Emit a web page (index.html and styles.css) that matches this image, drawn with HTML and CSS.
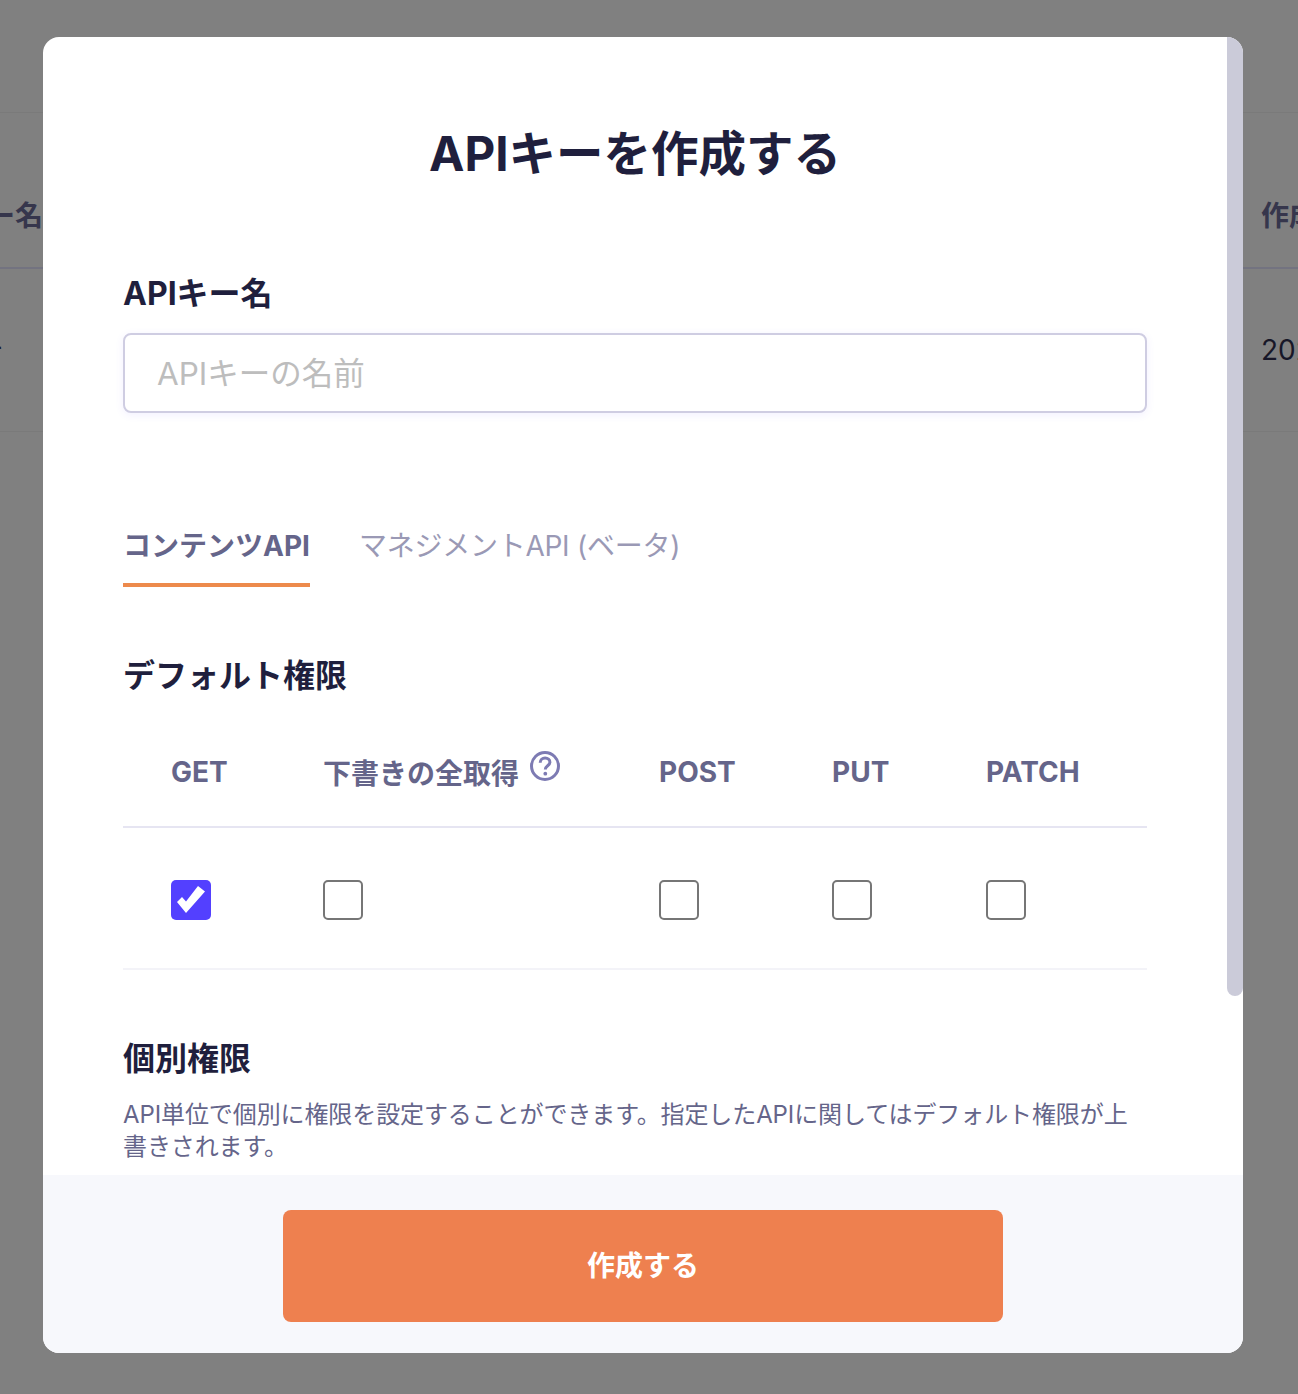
FILE: index.html
```html
<!DOCTYPE html>
<html lang="ja">
  <head>
    <meta charset="utf-8">
    <title>APIキーを作成する</title>
    <link rel="stylesheet" href="styles.css">
  </head>
  <body>
    <div class="page-table">
      <div class="page-row page-row-head">
        <span class="page-name">APIキー名</span>
        <span class="page-date">作成日</span>
      </div>
      <div class="page-row">
        <span class="page-key">下書き</span>
        <span class="page-value">2020/01/01</span>
      </div>
    </div>

    <div class="modal">
      <div class="modal-body">
        <h1 class="title">APIキーを作成する</h1>

        <label class="label" for="key-name">APIキー名</label>
        <input class="text-input" id="key-name" type="text" placeholder="APIキーの名前">

        <div class="tabs">
          <div class="tab tab-active">コンテンツAPI</div>
          <div class="tab tab-beta">マネジメントAPI (ベータ)</div>
        </div>

        <h2 class="section-title">デフォルト権限</h2>
        <div class="perm-grid perm-head">
          <div>GET</div>
          <div class="perm-draft">
            <span>下書きの全取得</span>
            <svg class="help" viewBox="0 0 30 30" width="30" height="30">
              <circle cx="15" cy="15" r="13.500" fill="none" stroke="#7d7bb3" stroke-width="3"/>
              <path d="M10.200 11.800c0-2.800 2.100-4.700 4.900-4.700 2.700 0 4.800 1.700 4.800 4.100 0 3.500-4.600 3.600-4.600 7.300" fill="none" stroke="#7d7bb3" stroke-width="3"/>
              <circle cx="15.300" cy="22.700" r="1.900" fill="#7d7bb3"/>
            </svg>
          </div>
          <div>POST</div>
          <div>PUT</div>
          <div>PATCH</div>
        </div>
        <div class="perm-grid perm-row">
          <div class="check check-on">
            <svg viewBox="0 0 40 40" width="40" height="40">
              <path d="M6 22l5-5 4 4.500L27 6l7 5.500L15 33z" fill="#fff"/>
            </svg>
          </div>
          <div class="check"></div>
          <div class="check"></div>
          <div class="check"></div>
          <div class="check"></div>
        </div>

        <h2 class="section-title">個別権限</h2>
        <p class="section-note">API単位で個別に権限を設定することができます。指定したAPIに関してはデフォルト権限が上書きされます。</p>
      </div>

      <div class="scroll-thumb"></div>

      <div class="modal-footer">
        <button class="submit" type="button">作成する</button>
      </div>
    </div>
  </body>
</html>
```

FILE: styles.css
```css
* {
  box-sizing: border-box;
}

html, body {
  margin: 0;
  height: 100%;
}

body {
  position: relative;
  height: 1394px;
  overflow: hidden;
  background: #808080;
  font-family: "Inter", "Noto Sans CJK JP", sans-serif;
}

/* page behind the overlay */
.page-table {
  padding-top: 112px;
}

.page-row {
  display: flex;
  align-items: center;
  height: 163px;
  border-bottom: 1px solid #7a7a7a;
  font-size: 28px;
  color: #171728;
}

.page-row-head {
  height: 157px;
  padding-top: 48px;
  border-top: 1px solid #7a7a7a;
  border-bottom: 2px solid #737380;
  font-weight: 700;
  color: #36364c;
}

.page-name {
  flex: none;
  margin-left: -88px;
  width: 1349px;
  white-space: nowrap;
}

.page-key {
  flex: none;
  margin-left: -79px;
  width: 1340px;
  white-space: nowrap;
}

.page-date, .page-value {
  flex: none;
  white-space: nowrap;
}

/* modal */
.modal {
  position: absolute;
  top: 37px;
  left: 43px;
  width: 1200px;
  height: 1316px;
  display: flex;
  flex-direction: column;
  overflow: hidden;
  background: #fff;
  border-radius: 16px;
}

.modal-body {
  flex: 1;
  min-height: 0;
  overflow: hidden;
  padding: 0 96px 0 80px;
}

.scroll-thumb {
  position: absolute;
  top: 0;
  right: 0;
  width: 16px;
  height: 959px;
  background: #cbcbd9;
  border-radius: 0 0 8px 8px;
}

.title {
  margin: 83px 0 0;
  text-align: center;
  font-size: 47.500px;
  line-height: 68px;
  font-weight: 700;
  color: #1f1f3d;
}

.label {
  display: block;
  margin-top: 84px;
  font-size: 32px;
  line-height: 44px;
  font-weight: 700;
  color: #1f1f3d;
}

.text-input {
  display: block;
  width: 100%;
  height: 80px;
  margin-top: 17px;
  padding: 0 32px;
  border: 2px solid #cfcde2;
  border-radius: 8px;
  box-shadow: 0 2px 8px rgba(83, 64, 255, 0.08);
  font: 400 31.500px "Inter", "Noto Sans CJK JP", sans-serif;
  color: #1f1f3d;
  outline: none;
}

.text-input::placeholder {
  color: #bdbdbd;
}

.tabs {
  display: flex;
  gap: 49px;
  margin-top: 108px;
}

.tab {
  height: 66px;
  font-size: 28px;
  line-height: 50px;
  color: #9a99b5;
}

.tab-active {
  font-weight: 700;
  color: #65658a;
  border-bottom: 4px solid #ed8a4c;
}

.tab-beta {
  letter-spacing: -0.250px;
}

.section-title {
  margin: 67px 0 0;
  font-size: 32px;
  line-height: 44px;
  font-weight: 700;
  color: #1f1f3d;
}

.section-note {
  margin: 18px 0 0;
  font-size: 24px;
  line-height: 32px;
  letter-spacing: -0.100px;
  color: #65658a;
}

.perm-grid {
  display: grid;
  grid-template-columns: 152px 336px 173px 154px 1fr;
  padding-left: 48px;
}

.perm-head {
  height: 130px;
  padding-top: 19px;
  align-items: center;
  border-bottom: 2px solid #e6e5f2;
  font-size: 28px;
  font-weight: 700;
  color: #65658a;
}

.perm-draft {
  display: flex;
  align-items: flex-start;
  gap: 11px;
}

.help {
  margin-top: -1px;
}

.perm-row {
  height: 142px;
  padding-top: 4px;
  align-items: center;
  border-bottom: 2px solid #f3f3f8;
}

.check {
  width: 40px;
  height: 40px;
  border: 2px solid #767676;
  border-radius: 5px;
}

.check-on {
  border: none;
  background: #5340ff;
}

.check-on svg {
  display: block;
}

/* footer */
.modal-footer {
  flex: none;
  height: 178px;
  padding-top: 35px;
  padding-left: 240px;
  background: #f7f8fc;
}

.submit {
  display: block;
  width: 720px;
  height: 112px;
  padding: 0 0 4px;
  border: none;
  border-radius: 8px;
  background: #ee804f;
  font: 700 28px "Inter", "Noto Sans CJK JP", sans-serif;
  color: #fff;
}
```
